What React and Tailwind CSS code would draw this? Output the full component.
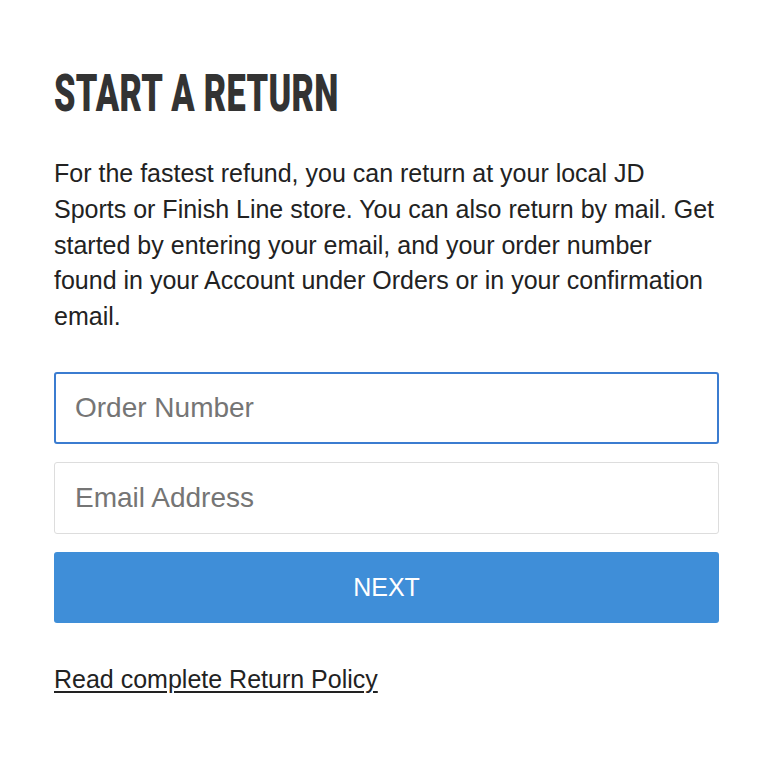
export default function App() {
  return (
    <div className="w-[768px] h-[772px] bg-white" style={{ fontFamily: '"Liberation Sans", Arial, sans-serif' }}>
      <div className="px-[54px] pt-[70px]">
        <h1 className="h-[48px] whitespace-nowrap">
          <span
            className="inline-block origin-left scale-x-[0.66] text-[52px] leading-[48px] font-black text-[#333333] tracking-[0.5px]"
            style={{ fontFamily: 'Roboto, "Liberation Sans", sans-serif' }}
          >
            START A RETURN
          </span>
        </h1>
        <p className="mt-[38px] w-[680px] whitespace-nowrap text-[25px] leading-[35.8px] text-[#222222]">
          For the fastest refund, you can return at your local JD
          <br />
          Sports or Finish Line store. You can also return by mail. Get
          <br />
          started by entering your email, and your order number
          <br />
          found in your Account under Orders or in your confirmation
          <br />
          email.
        </p>
        <div className="mt-[37px] flex flex-col w-[665px]">
          <input
            className="h-[72px] w-full rounded-[3px] border-2 border-[#3b7cd0] px-[19px] text-[28px] text-[#333] placeholder:text-[#757575] outline-none"
            placeholder="Order Number"
          />
          <input
            className="mt-[18px] h-[72px] w-full rounded-[3px] border border-[#dddddd] px-[20px] text-[28px] text-[#333] placeholder:text-[#757575] outline-none"
            placeholder="Email Address"
          />
          <button className="mt-[18px] h-[71px] w-full rounded-[3px] bg-[#3f8ed8] text-white text-[25px]">
            NEXT
          </button>
        </div>
        <a href="#" className="mt-[40px] inline-block text-[25px] leading-[32px] text-[#222222] underline underline-offset-[3px]">
          Read complete Return Policy
        </a>
      </div>
    </div>
  );
}
